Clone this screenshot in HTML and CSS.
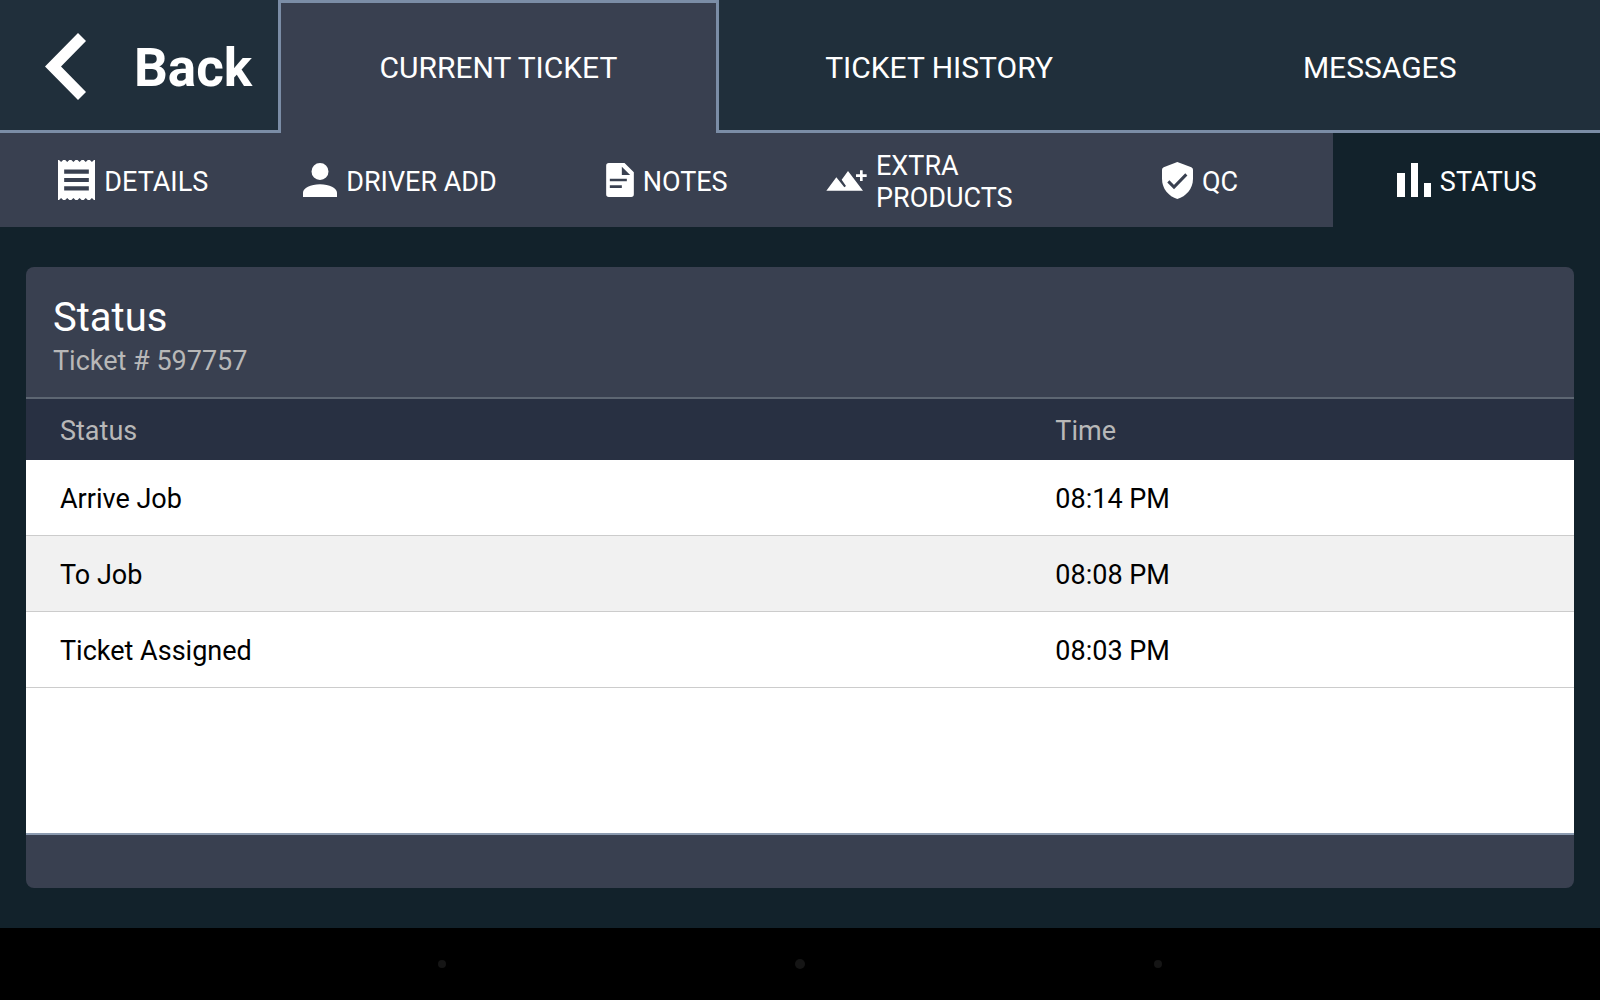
FILE: index.html
```html
<!DOCTYPE html>
<html lang="en">
<head>
    <meta charset="UTF-8">
    <meta name="viewport" content="width=device-width, initial-scale=1.0">
    <title>Ticket Status</title>
    <link rel="stylesheet" href="styles.css">
</head>
<body>
    <header class="topbar">
        <button class="back">
            <svg width="41" height="67" viewBox="0 0 41 67"><path d="M33 0l8 8-25 25.500 25 25.500-8 8L0 33.500z"/></svg>
            <span>Back</span>
        </button>
        <nav class="tabs">
            <button class="tab active">CURRENT TICKET</button>
            <button class="tab">TICKET HISTORY</button>
            <button class="tab">MESSAGES</button>
        </nav>
    </header>

    <nav class="subnav">
        <button class="subtab">
            <svg width="37" height="40" viewBox="3 2.500 18 19" preserveAspectRatio="none"><path d="M18 17H6v-2h12v2zm0-4H6v-2h12v2zm0-4H6V7h12v2zM3 22l1.500-1.500L6 22l1.500-1.500L9 22l1.500-1.500L12 22l1.500-1.500L15 22l1.500-1.500L18 22l1.500-1.500L21 22V2l-1.500 1.500L18 2l-1.500 1.500L15 2l-1.500 1.500L12 2l-1.500 1.500L9 2 7.500 3.500 6 2 4.500 3.500 3 2v20z"/></svg>
            <span>DETAILS</span>
        </button>
        <button class="subtab">
            <svg width="34" height="34" viewBox="4 4 16 16"><path d="M12 4a4 4 0 1 1 0 8 4 4 0 0 1 0-8zm0 10c4.420 0 8 1.790 8 4v2H4v-2c0-2.210 3.580-4 8-4z"/></svg>
            <span>DRIVER ADD</span>
        </button>
        <button class="subtab">
            <svg width="28" height="34" viewBox="0 0 83 102"><path fill-rule="evenodd" d="M8 0h47l28 28v66a8 8 0 0 1-8 8H8a8 8 0 0 1-8-8V8a8 8 0 0 1 8-8zm39 11v25h25zM11 47v8h51v-8zm0 20v8h36v-8z"/></svg>
            <span>NOTES</span>
        </button>
        <button class="subtab">
            <svg width="41" height="21" viewBox="0 0 121 63"><path d="M0 62l30-40 24 30 5-4-13-19L65 3l45 59zM101 1h8v12h12v8h-12v12h-8V21H89v-8h12z"/></svg>
            <span>EXTRA PRODUCTS</span>
        </button>
        <button class="subtab">
            <svg width="31" height="37" viewBox="0 0 93 111"><path d="M46 0l42 16q5 2 5 7v27c0 30-21 53-47 61C20 103 0 80 0 50V23q0-5 5-7z"/><path class="check" d="M19 58l17 17 37-38"/></svg>
            <span>QC</span>
        </button>
        <button class="subtab active">
            <svg width="34" height="34" viewBox="0 0 102 102"><path d="M0 30h24v72H0zM42 0h21v102H42zM81 60h21v42H81z"/></svg>
            <span>STATUS</span>
        </button>
    </nav>

    <main class="content">
        <section class="card">
            <div class="card-header">
                <h1>Status</h1>
                <p>Ticket # 597757</p>
            </div>
            <div class="card-body">
                <table>
                    <thead>
                        <tr>
                            <th class="status">Status</th>
                            <th>Time</th>
                        </tr>
                    </thead>
                    <tbody>
                        <tr>
                            <td>Arrive Job</td>
                            <td>08:14 PM</td>
                        </tr>
                        <tr>
                            <td>To Job</td>
                            <td>08:08 PM</td>
                        </tr>
                        <tr>
                            <td>Ticket Assigned</td>
                            <td>08:03 PM</td>
                        </tr>
                    </tbody>
                </table>
            </div>
            <div class="card-footer"></div>
        </section>
    </main>

    <footer class="system-bar">
        <button class="dot" aria-label="Recent apps"></button>
        <button class="dot home" aria-label="Home"></button>
        <button class="dot" aria-label="System back"></button>
    </footer>
</body>
</html>
```
FILE: styles.css
```css
* {
    box-sizing: border-box;
}
body {
    margin: 0;
    min-height: 100vh;
    display: flex;
    flex-direction: column;
    font-family: Roboto, sans-serif;
    background-color: #12222b;
    color: white;
}
button {
    border: none;
    padding: 0;
    background: none;
    color: inherit;
    font-family: inherit;
    cursor: pointer;
}
button span {
    padding-top: 3px;
}
svg {
    flex-shrink: 0;
    fill: white;
}

/* top tabs */
.topbar {
    display: flex;
    height: 133px;
    background: #202f3b;
}
.back {
    display: flex;
    align-items: center;
    gap: 48px;
    padding: 3px 26px 0 45px;
    border-bottom: 3px solid #7b8da6;
    font-size: 53px;
    font-weight: bold;
}
.tabs {
    flex: 1;
    display: grid;
    grid-template-columns: repeat(3, 1fr);
}
.tab {
    padding-top: 5px;
    border-bottom: 3px solid #7b8da6;
    font-size: 30px;
}
.tab.active {
    padding: 2px 0 3px;
    background: #394050;
    border: 3px solid #7b8da6;
    border-bottom: none;
}

/* ticket sections */
.subnav {
    display: flex;
    height: 94px;
    background: #394050;
}
.subtab {
    flex: 1;
    display: flex;
    align-items: center;
    justify-content: center;
    gap: 9px;
    padding: 0 26px;
    font-size: 27px;
    line-height: 32px;
    text-align: left;
}
.subtab.active {
    background: #12222b;
}
.check {
    fill: none;
    stroke: #394050;
    stroke-width: 9;
}

/* status card */
.content {
    flex: 1;
    display: flex;
    padding: 40px 26px;
}
.card {
    flex: 1;
    display: flex;
    flex-direction: column;
    background: #394050;
    border-radius: 8px;
    overflow: hidden;
}
.card-header {
    padding: 26px 27px 17px;
    border-bottom: 2px solid #5d6672;
}
h1 {
    margin: 0;
    font-size: 40px;
    font-weight: normal;
    line-height: 50px;
}
p {
    margin: 0;
    font-size: 27px;
    line-height: 37px;
    color: #b8b8b8;
}
.card-body {
    flex: 1;
    background: white;
    border-bottom: 2px solid #8c9bb0;
}
table {
    width: 100%;
    border-spacing: 0;
    font-size: 27px;
    line-height: 32px;
}
th, td {
    padding: 3px 34px 0;
    text-align: left;
    font-weight: normal;
}
th {
    height: 61px;
    background: #283042;
    color: #b8b8b8;
}
.status {
    width: 64.300%;
}
td {
    height: 76px;
    border-bottom: 1px solid #ccc;
    color: black;
}
tbody tr:nth-child(even) {
    background: #f1f1f1;
}
.card-footer {
    height: 53px;
}

/* device navigation */
.system-bar {
    display: flex;
    justify-content: space-around;
    align-items: center;
    height: 72px;
    padding: 0 16.500%;
    background: black;
}
.dot {
    width: 8px;
    height: 8px;
    border-radius: 50%;
    background: #151515;
}
.home {
    width: 10px;
    height: 10px;
}
```
